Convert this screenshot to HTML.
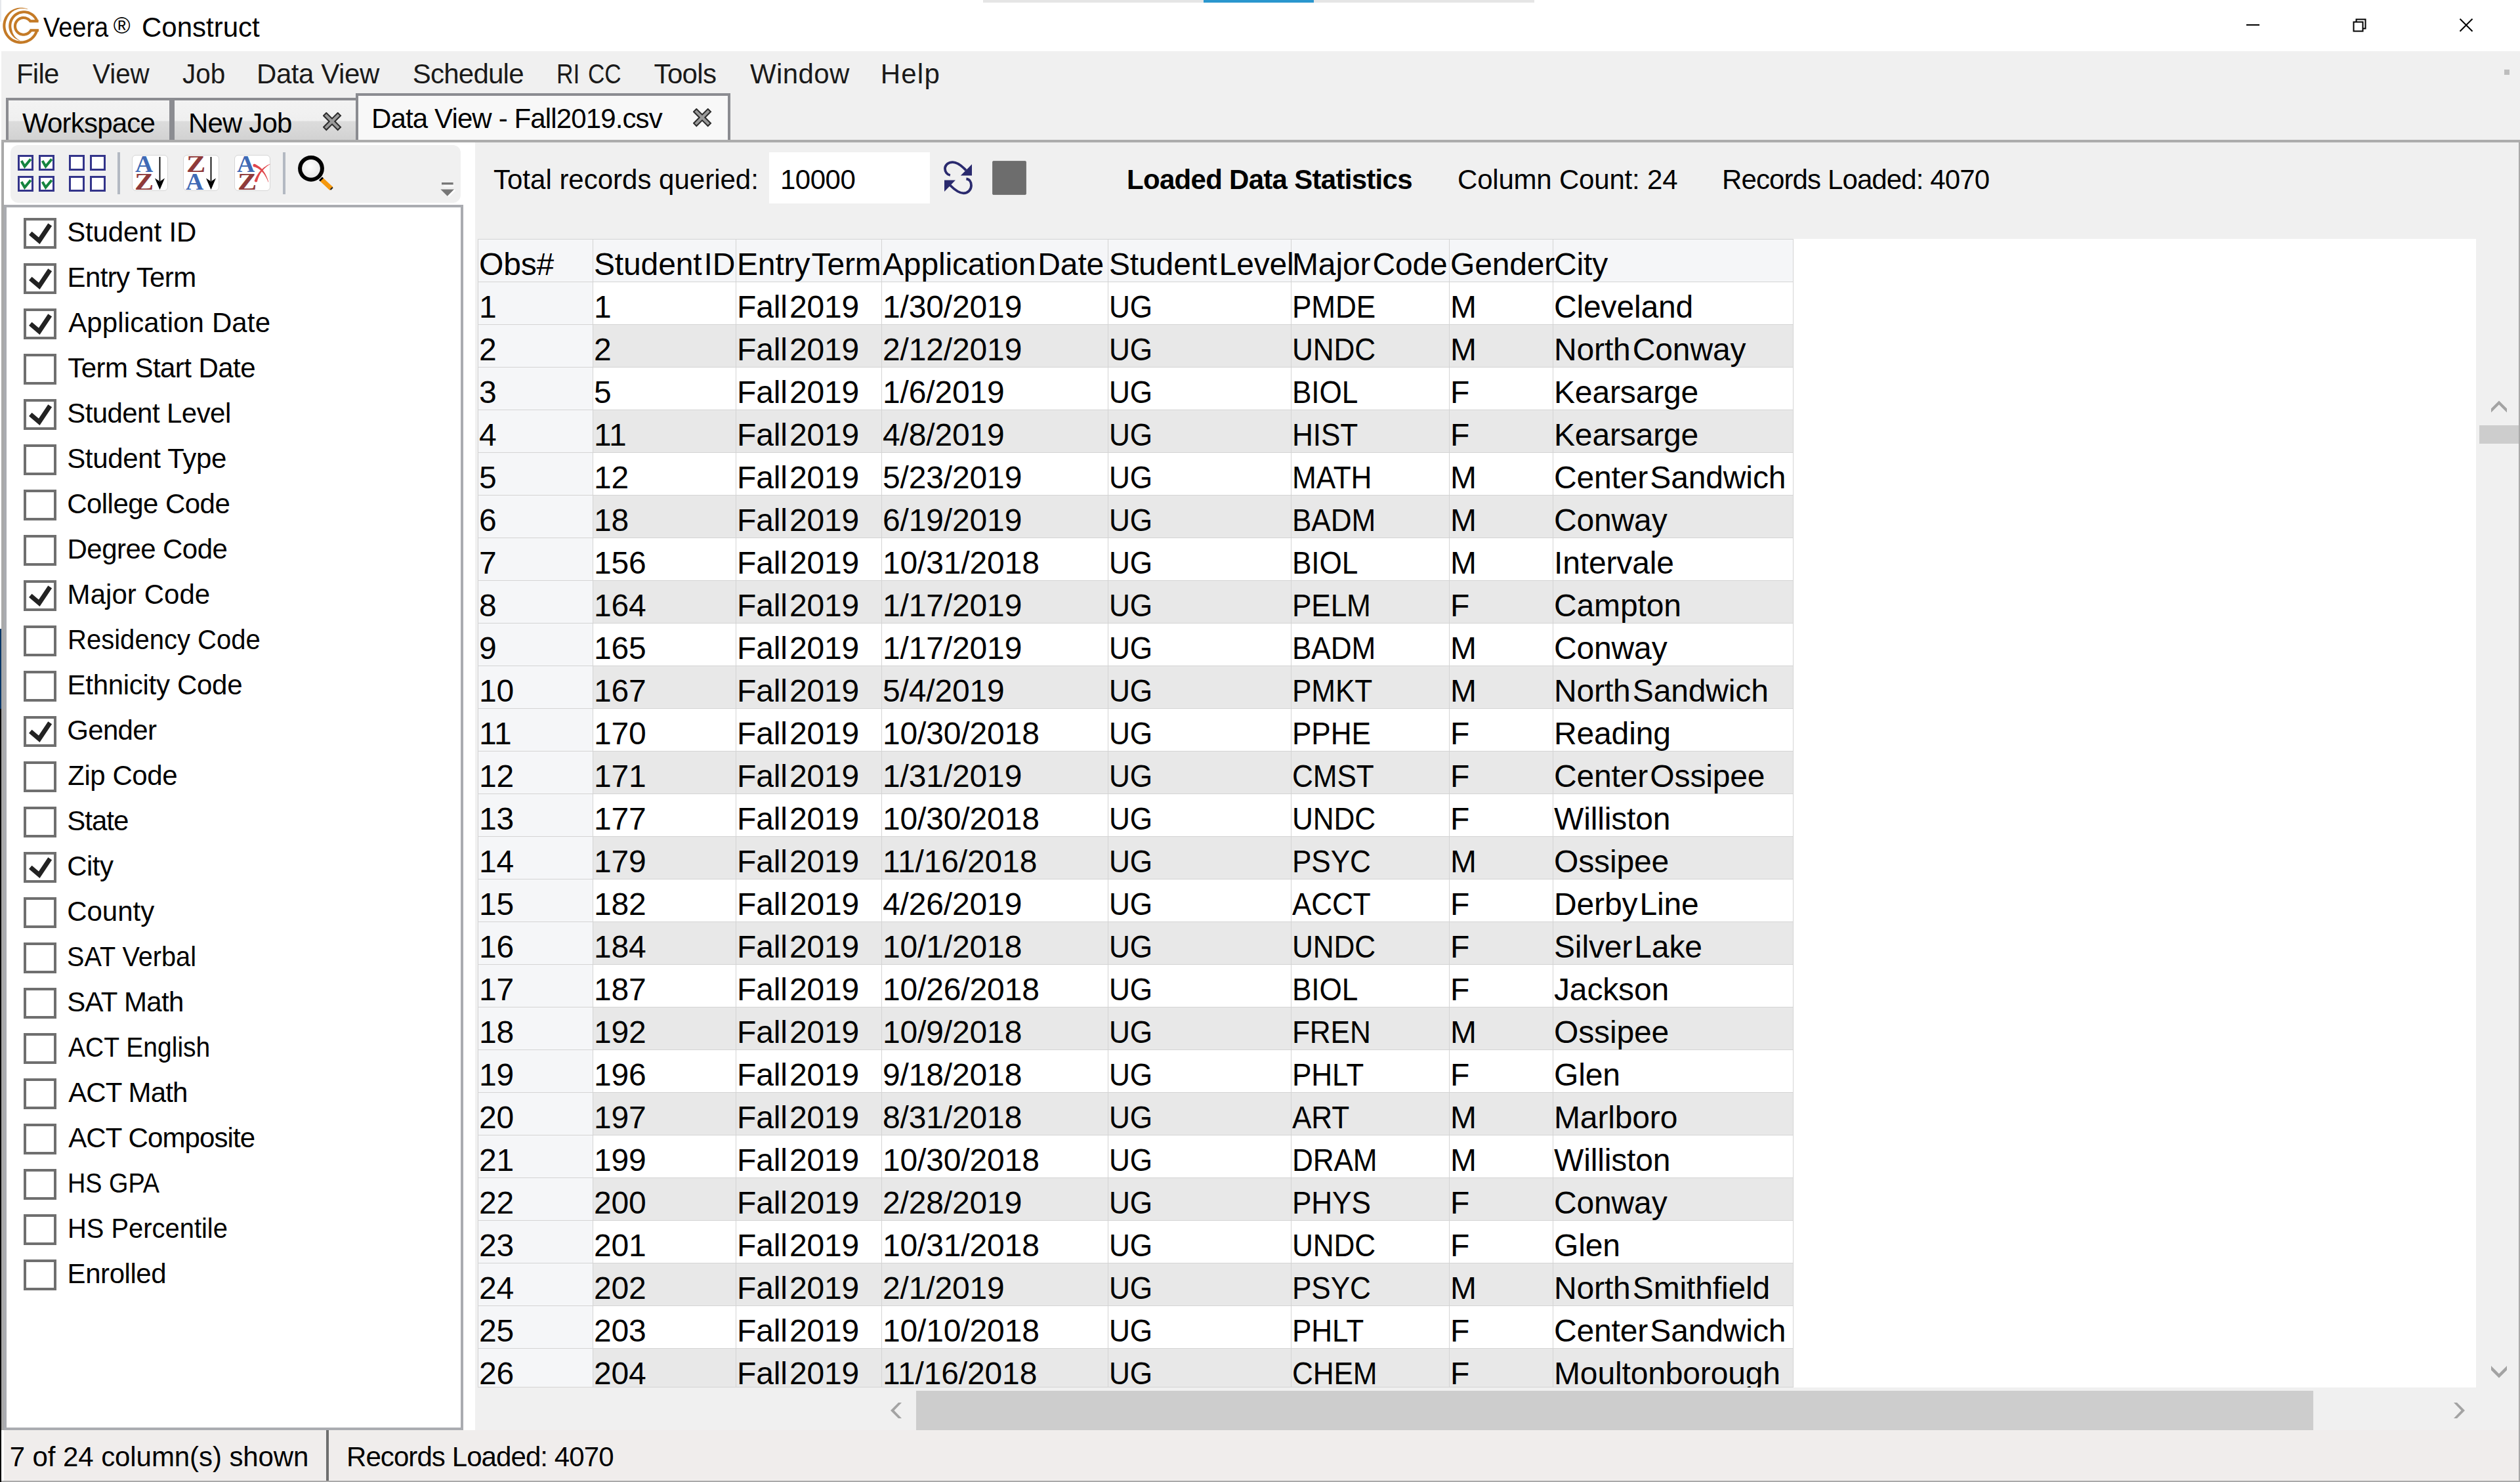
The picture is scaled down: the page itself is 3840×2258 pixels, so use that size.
<!DOCTYPE html>
<html><head><meta charset="utf-8"><style>
html,body{margin:0;padding:0;width:3840px;height:2258px;overflow:hidden;background:#fff}
body{position:relative;font-family:"Liberation Sans", sans-serif;color:#000}
body div, body svg{position:absolute;box-sizing:content-box}
#tbl div{position:absolute}
.t{white-space:pre;font-family:"Liberation Sans", sans-serif}
.s{font-family:"Liberation Serif",serif;font-weight:bold;font-size:36px;line-height:32px}
</style></head><body>
<div style="left:0px;top:0px;width:2px;height:33px;background:#e6e8ec"></div><svg style="left:0;top:0" width="64" height="78" viewBox="0 0 64 78"><g fill="#c47a26"><path d="M58.36 46.32 L57.70 48.44 L56.87 50.50 L55.88 52.49 L54.72 54.39 L53.42 56.19 L51.98 57.88 L50.40 59.45 L48.71 60.89 L46.90 62.18 L44.99 63.33 L43.00 64.32 L40.93 65.14 L38.81 65.79 L36.64 66.27 L34.44 66.57 L32.22 66.70 L29.99 66.64 L27.78 66.40 L25.60 65.99 L23.45 65.40 L21.36 64.64 L19.34 63.72 L17.40 62.63 L15.56 61.39 L13.82 60.01 L12.20 58.49 L10.70 56.84 L9.35 55.08 L8.14 53.21 L7.08 51.26 L6.19 49.22 L5.46 47.12 L4.91 44.96 L4.53 42.77 L4.33 40.56 L4.31 38.34 L4.47 36.12 L4.81 33.92 L5.33 31.76 L6.01 29.64 L6.87 27.59 L7.89 25.62 L9.06 23.73 L10.39 21.94 L11.85 20.27 L13.45 18.72 L15.16 17.31 L16.98 16.03 L18.90 14.91 L20.91 13.95 L22.98 13.15 L25.12 12.52 L27.29 12.07 L29.50 11.80 L31.72 11.70 L33.94 11.78 L36.15 12.05 L38.33 12.49 L40.47 13.10 L42.55 13.89 L42.39 14.25 L40.28 13.67 L38.14 13.25 L35.99 13.02 L33.85 12.96 L31.72 13.07 L29.63 13.36 L27.58 13.81 L25.59 14.42 L23.67 15.19 L21.84 16.11 L20.10 17.16 L18.46 18.34 L16.94 19.64 L15.53 21.05 L14.26 22.56 L13.13 24.15 L12.13 25.82 L11.29 27.55 L10.59 29.32 L9.86 31.07 L9.27 32.87 L8.84 34.71 L8.55 36.58 L8.41 38.46 L8.43 40.36 L8.60 42.24 L8.92 44.11 L9.39 45.94 L10.01 47.73 L10.77 49.46 L11.67 51.12 L12.69 52.71 L13.85 54.21 L15.12 55.61 L16.50 56.90 L17.98 58.08 L19.55 59.14 L21.20 60.06 L22.92 60.85 L24.70 61.50 L26.52 62.00 L28.38 62.35 L30.26 62.55 L32.15 62.60 L34.04 62.49 L35.92 62.23 L37.76 61.83 L39.57 61.27 L41.33 60.57 L43.03 59.73 L44.65 58.76 L46.19 57.66 L47.63 56.43 L48.97 55.10 L50.20 53.66 L51.31 52.13 L52.29 50.51 L53.13 48.82 L53.84 47.06 L54.40 45.26 Z"/><path d="M58.53 31.91 L57.96 30.43 L57.29 28.98 L56.52 27.59 L55.66 26.25 L54.71 24.97 L53.68 23.76 L52.56 22.62 L51.37 21.56 L50.11 20.59 L48.79 19.70 L47.41 18.91 L45.98 18.21 L44.50 17.62 L42.99 17.12 L41.44 16.73 L39.88 16.45 L38.29 16.27 L36.70 16.20 L35.11 16.24 L33.53 16.39 L31.95 16.65 L30.40 17.01 L28.88 17.48 L27.40 18.05 L25.95 18.72 L24.56 19.49 L23.22 20.36 L21.94 21.31 L20.73 22.34 L19.60 23.46 L18.54 24.65 L17.57 25.91 L16.69 27.24 L15.90 28.62 L15.20 30.05 L14.61 31.53 L14.11 33.05 L13.72 34.59 L13.44 36.16 L13.27 37.74 L13.20 39.33 L13.24 40.92 L13.39 42.51 L13.65 44.08 L14.02 45.63 L14.49 47.15 L15.07 48.64 L15.74 50.08 L16.51 51.47 L17.37 52.81 L18.33 54.08 L19.37 55.29 L20.49 56.42 L21.68 57.48 L22.94 58.45 L24.27 59.33 L25.65 60.12 L27.08 60.81 L28.56 61.41 L30.08 61.90 L30.19 61.51 L28.79 60.78 L27.46 59.96 L26.21 59.05 L25.04 58.08 L23.96 57.03 L22.96 55.93 L22.05 54.77 L21.24 53.57 L20.52 52.32 L19.91 51.05 L19.39 49.75 L18.97 48.43 L18.64 47.11 L18.36 45.80 L17.98 44.55 L17.67 43.27 L17.46 41.98 L17.34 40.67 L17.30 39.36 L17.35 38.05 L17.50 36.74 L17.73 35.45 L18.05 34.18 L18.46 32.93 L18.95 31.72 L19.52 30.54 L20.17 29.40 L20.90 28.31 L21.70 27.27 L22.57 26.28 L23.51 25.36 L24.50 24.51 L25.56 23.72 L26.66 23.01 L27.81 22.38 L29.00 21.83 L30.22 21.36 L31.48 20.97 L32.75 20.67 L34.05 20.46 L35.36 20.33 L36.67 20.30 L37.98 20.36 L39.28 20.50 L40.57 20.74 L41.85 21.06 L43.09 21.47 L44.31 21.96 L45.49 22.53 L46.63 23.19 L47.72 23.92 L48.76 24.72 L49.74 25.59 L50.66 26.53 L51.51 27.53 L52.29 28.58 L53.00 29.68 L53.63 30.83 L54.18 32.02 L54.65 33.25 Z"/><path d="M48.57 47.57 L47.86 48.64 L47.07 49.65 L46.19 50.58 L45.23 51.44 L44.20 52.20 L43.11 52.88 L41.97 53.46 L40.78 53.94 L39.56 54.32 L38.30 54.59 L37.03 54.75 L35.75 54.80 L34.47 54.74 L33.20 54.57 L31.94 54.29 L30.72 53.91 L29.53 53.42 L28.40 52.83 L27.31 52.15 L26.29 51.37 L25.34 50.51 L24.46 49.57 L23.67 48.56 L22.97 47.48 L22.37 46.35 L21.86 45.17 L21.46 43.96 L21.17 42.71 L20.98 41.44 L20.90 40.16 L20.94 38.88 L21.08 37.60 L21.33 36.35 L21.69 35.11 L22.15 33.92 L22.72 32.77 L23.38 31.67 L24.13 30.63 L24.97 29.66 L25.89 28.77 L26.89 27.96 L27.95 27.24 L29.07 26.61 L30.23 26.08 L31.44 25.65 L32.69 25.33 L33.95 25.12 L35.23 25.01 L36.51 25.02 L37.79 25.13 L39.05 25.36 L40.29 25.69 L41.49 26.13 L42.66 26.67 L43.77 27.31 L44.82 28.04 L45.81 28.86 L46.72 29.76 L47.55 30.74 L48.30 31.78 L44.86 34.02 L44.32 33.26 L43.72 32.55 L43.05 31.90 L42.34 31.31 L41.58 30.77 L40.77 30.31 L39.93 29.92 L39.05 29.60 L38.16 29.36 L37.24 29.20 L36.32 29.11 L35.39 29.11 L34.46 29.18 L33.54 29.34 L32.64 29.57 L31.77 29.88 L30.92 30.27 L30.11 30.72 L29.34 31.24 L28.62 31.83 L27.95 32.48 L27.34 33.18 L26.80 33.93 L26.32 34.73 L25.91 35.56 L25.57 36.43 L25.31 37.32 L25.13 38.24 L25.03 39.16 L25.00 40.09 L25.06 41.02 L25.19 41.94 L25.41 42.84 L25.70 43.72 L26.07 44.58 L26.50 45.40 L27.01 46.18 L27.58 46.91 L28.22 47.59 L28.91 48.21 L29.65 48.78 L30.43 49.27 L31.26 49.70 L32.12 50.05 L33.00 50.33 L33.91 50.53 L34.83 50.66 L35.76 50.70 L36.69 50.66 L37.61 50.55 L38.52 50.35 L39.41 50.08 L40.27 49.73 L41.10 49.31 L41.89 48.82 L42.64 48.26 L43.33 47.64 L43.97 46.97 L44.54 46.24 L45.06 45.46 Z"/><rect x="45" y="30.1" width="13.6" height="4.2"/><rect x="45.5" y="44.2" width="13.5" height="4.1"/></g></svg><div class="t" style="left:66.0px;top:21px;font-size:42px;line-height:42px;color:#000;transform:scaleX(0.9037);transform-origin:0 0;">Veera</div><div class="t" style="left:172.8px;top:21px;font-size:35px;line-height:35px;color:#000;">®</div><div class="t" style="left:216px;top:21px;font-size:42px;line-height:42px;color:#000;letter-spacing:0.0px;">Construct</div><div style="left:1498px;top:0px;width:840px;height:4px;background:#e5e5e5"></div><div style="left:1834px;top:0px;width:168px;height:4px;background:#2a97ce"></div><div style="left:3423px;top:37px;width:20px;height:2px;background:#000"></div><svg style="left:3580.5px;top:24.5px" width="30" height="30" viewBox="0 0 30 30"><g fill="none" stroke="#000" stroke-width="2"><rect x="5.5" y="8.5" width="14" height="14"/><path d="M9.5 8.5 V4.5 H23.5 V18.5 H19.5"/></g></svg><svg style="left:3743px;top:23px" width="30" height="30" viewBox="0 0 30 30"><g stroke="#000" stroke-width="2"><path d="M5.5 5.8 L24.5 24.8 M24.5 5.8 L5.5 24.8"/></g></svg><div style="left:2px;top:78px;width:3838px;height:135px;background:#f0f0f0"></div><div style="left:3816px;top:106px;width:8px;height:8px;background:#bdbdbd"></div><div class="t" style="left:25px;top:92px;font-size:42px;line-height:42px;color:#1a1a1a;letter-spacing:-0.8px;">File</div><div class="t" style="left:140.5px;top:92px;font-size:42px;line-height:42px;color:#1a1a1a;transform:scaleX(0.9607);transform-origin:0 0;">View</div><div class="t" style="left:278.04px;top:92px;font-size:42px;line-height:42px;color:#1a1a1a;transform:scaleX(0.9641);transform-origin:0 0;">Job</div><div class="t" style="left:391px;top:92px;font-size:42px;line-height:42px;color:#1a1a1a;letter-spacing:-0.42px;">Data View</div><div class="t" style="left:628.7px;top:92px;font-size:42px;line-height:42px;color:#1a1a1a;letter-spacing:-0.76px;">Schedule</div><div class="t" style="left:848.33px;top:92px;font-size:42px;line-height:42px;color:#1a1a1a;transform:scaleX(0.8424);transform-origin:0 0;">RI</div><div class="t" style="left:895.53px;top:92px;font-size:42px;line-height:42px;color:#1a1a1a;transform:scaleX(0.8357);transform-origin:0 0;">CC</div><div class="t" style="left:996.5px;top:92px;font-size:42px;line-height:42px;color:#1a1a1a;letter-spacing:-0.62px;">Tools</div><div class="t" style="left:1143px;top:92px;font-size:42px;line-height:42px;color:#1a1a1a;letter-spacing:0.4px;">Window</div><div class="t" style="left:1341.7px;top:92px;font-size:42px;line-height:42px;color:#1a1a1a;letter-spacing:1.23px;">Help</div><div style="left:9px;top:149px;width:245px;height:60px;border:4px solid #8b8c91;border-bottom:none;background:linear-gradient(#f3f3f3 0px,#efefef 31px,#dcdcdc 32px,#d2d2d2 60px)"></div><div style="left:262px;top:149px;width:276px;height:60px;border:4px solid #8b8c91;border-bottom:none;background:linear-gradient(#f3f3f3 0px,#efefef 31px,#dcdcdc 32px,#d2d2d2 60px)"></div><div style="left:542px;top:142px;width:563px;height:67px;border:4px solid #8b8c91;border-bottom:none;background:#f8f8f8"></div><div class="t" style="left:34px;top:167px;font-size:42px;line-height:42px;;letter-spacing:-0.81px;">Workspace</div><div class="t" style="left:287px;top:167px;font-size:42px;line-height:42px;;letter-spacing:-0.83px;">New Job</div><div class="t" style="left:566px;top:160px;font-size:42px;line-height:42px;;letter-spacing:-0.87px;">Data View - Fall2019.csv</div><svg style="left:492px;top:171px" width="30" height="30" viewBox="0 0 30 30"><path d="M1 5.3 L5.3 1 L14 9.7 L22.7 1 L27 5.3 L18.3 14 L27 22.7 L22.7 27 L14 18.3 L5.3 27 L1 22.7 L9.7 14 Z" fill="#999" stroke="#2b2b2b" stroke-width="2" stroke-linejoin="miter"/></svg><svg style="left:1056px;top:165px" width="30" height="30" viewBox="0 0 30 30"><path d="M1 5.3 L5.3 1 L14 9.7 L22.7 1 L27 5.3 L18.3 14 L27 22.7 L22.7 27 L14 18.3 L5.3 27 L1 22.7 L9.7 14 Z" fill="#999" stroke="#2b2b2b" stroke-width="2" stroke-linejoin="miter"/></svg><div style="left:2px;top:213px;width:3838px;height:4px;background:#acacac"></div><div style="left:2px;top:217px;width:4px;height:1962px;background:#a9a9a9"></div><div style="left:3838px;top:217px;width:2px;height:2041px;background:#a9a9a9"></div><div style="left:6px;top:217px;width:718px;height:1962px;background:#fff"></div><div style="left:724px;top:217px;width:3114px;height:1962px;background:#f0f0f0"></div><div style="left:16px;top:221px;width:686px;height:88px;background:#f0f0f0;border-radius:12px"></div><div style="left:27px;top:236px;width:18px;height:18px;border:3.2px solid #33348a;background:#fff"></div><svg style="left:27px;top:236px" width="24" height="24" viewBox="0 0 24 24"><path d="M5.6 9 L10.6 17.6 L19.8 6.4" fill="none" stroke="#15843f" stroke-width="4"/></svg><div style="left:58.6px;top:236px;width:18px;height:18px;border:3.2px solid #33348a;background:#fff"></div><svg style="left:58.6px;top:236px" width="24" height="24" viewBox="0 0 24 24"><path d="M5.6 9 L10.6 17.6 L19.8 6.4" fill="none" stroke="#15843f" stroke-width="4"/></svg><div style="left:27px;top:267.6px;width:18px;height:18px;border:3.2px solid #33348a;background:#fff"></div><svg style="left:27px;top:267.6px" width="24" height="24" viewBox="0 0 24 24"><path d="M5.6 9 L10.6 17.6 L19.8 6.4" fill="none" stroke="#15843f" stroke-width="4"/></svg><div style="left:58.6px;top:267.6px;width:18px;height:18px;border:3.2px solid #33348a;background:#fff"></div><svg style="left:58.6px;top:267.6px" width="24" height="24" viewBox="0 0 24 24"><path d="M5.6 9 L10.6 17.6 L19.8 6.4" fill="none" stroke="#15843f" stroke-width="4"/></svg><div style="left:105px;top:236px;width:18px;height:18px;border:3.2px solid #33348a;background:#fff"></div><div style="left:136.6px;top:236px;width:18px;height:18px;border:3.2px solid #33348a;background:#fff"></div><div style="left:105px;top:267.6px;width:18px;height:18px;border:3.2px solid #33348a;background:#fff"></div><div style="left:136.6px;top:267.6px;width:18px;height:18px;border:3.2px solid #33348a;background:#fff"></div><div style="left:179px;top:232px;width:4px;height:64px;background:#b3b9c2"></div><div style="left:431px;top:232px;width:4px;height:64px;background:#b3b9c2"></div><div style="left:201px;top:236px;width:53px;height:53px;border:1px solid #d6d6d6;border-radius:6px;background:#fff"></div><div class="s" style="left:205.7px;top:234px;color:#3f6ab5;transform:scaleX(1.05);transform-origin:0 0">A</div><div class="s" style="left:205.2px;top:261px;color:#8f3a3a;transform:scaleX(1.22);transform-origin:0 0">Z</div><svg style="left:201px;top:236px" width="55" height="55" viewBox="0 0 55 55"><path d="M42.5 3 V40" stroke="#000" stroke-width="1.8"/><path d="M35 35.5 L42.5 53 L50 35.5 L42.5 40.5 Z" fill="#000"/></svg><div style="left:279px;top:236px;width:53px;height:53px;border:1px solid #d6d6d6;border-radius:6px;background:#fff"></div><div class="s" style="left:283.5px;top:234px;color:#8f3a3a;transform:scaleX(1.22);transform-origin:0 0">Z</div><div class="s" style="left:283.1px;top:261px;color:#3f6ab5;transform:scaleX(1.05);transform-origin:0 0">A</div><svg style="left:279px;top:236px" width="55" height="55" viewBox="0 0 55 55"><path d="M42.5 3 V40" stroke="#000" stroke-width="1.8"/><path d="M35 35.5 L42.5 53 L50 35.5 L42.5 40.5 Z" fill="#000"/></svg><div style="left:357px;top:236px;width:53px;height:53px;border:1px solid #d6d6d6;border-radius:6px;background:#fff"></div><div class="s" style="left:360.5px;top:234px;color:#3f6ab5;transform:scaleX(1.05);transform-origin:0 0">A</div><div class="s" style="left:362px;top:261px;color:#8f3a3a;transform:scaleX(1.22);transform-origin:0 0">Z</div><svg style="left:357px;top:236px" width="55" height="55" viewBox="0 0 55 55"><g fill="#e0474c"><path d="M29.15 17.90 L30.33 18.21 L31.49 18.58 L32.63 19.00 L33.75 19.48 L34.85 20.01 L35.93 20.60 L36.99 21.25 L38.03 21.96 L39.06 22.73 L40.06 23.55 L41.04 24.44 L42.00 25.39 L42.94 26.40 L43.86 27.48 L44.76 28.61 L45.63 29.81 L46.48 31.06 L47.30 32.38 L48.10 33.77 L48.88 35.21 L49.63 36.71 L50.35 38.28 L51.05 39.91 L51.72 41.59 L52.28 41.41 L51.76 39.65 L51.20 37.95 L50.62 36.30 L50.00 34.70 L49.35 33.15 L48.67 31.65 L47.96 30.21 L47.21 28.82 L46.44 27.47 L45.62 26.18 L44.78 24.95 L43.90 23.76 L42.98 22.62 L42.03 21.54 L41.04 20.51 L40.01 19.53 L38.95 18.60 L37.84 17.73 L36.71 16.92 L35.53 16.16 L34.31 15.46 L33.06 14.81 L31.77 14.23 L30.45 13.70 Z"/><path d="M54.36 13.73 L52.96 14.40 L51.60 15.09 L50.27 15.83 L48.97 16.60 L47.71 17.40 L46.49 18.24 L45.30 19.12 L44.15 20.03 L43.03 20.99 L41.95 21.97 L40.91 23.00 L39.90 24.06 L38.93 25.16 L38.00 26.30 L37.10 27.47 L36.24 28.69 L35.42 29.94 L34.64 31.22 L33.90 32.55 L33.20 33.91 L32.53 35.30 L31.91 36.74 L31.33 38.21 L30.78 39.71 L34.82 40.89 L35.18 39.46 L35.58 38.06 L36.02 36.69 L36.50 35.34 L37.01 34.03 L37.57 32.74 L38.17 31.48 L38.80 30.25 L39.48 29.04 L40.20 27.86 L40.95 26.71 L41.75 25.59 L42.59 24.49 L43.47 23.42 L44.40 22.38 L45.36 21.37 L46.37 20.38 L47.42 19.42 L48.52 18.49 L49.65 17.59 L50.83 16.71 L52.06 15.87 L53.33 15.05 L54.64 14.27 Z"/><circle cx="30.6" cy="16" r="2.2"/><circle cx="32.9" cy="39.6" r="2"/></g></svg><svg style="left:450px;top:232px" width="64" height="64" viewBox="0 0 64 64"><defs><radialGradient id="mg" cx="0.45" cy="0.4" r="0.6"><stop offset="0" stop-color="#fff"/><stop offset="1" stop-color="#e4e4e4"/></radialGradient></defs><circle cx="24" cy="24.8" r="16.9" fill="url(#mg)" stroke="#000" stroke-width="6"/><path d="M40 41.5 L55 55.5" stroke="#f5980e" stroke-width="7"/><path d="M38.5 40 L40.5 42" stroke="#000" stroke-width="7"/><path d="M53.5 57 L57 53.5" stroke="#222" stroke-width="2"/></svg><svg style="left:668px;top:274px" width="30" height="30" viewBox="0 0 30 30"><rect x="5" y="4" width="17.6" height="3.3" fill="#777"/><rect x="8" y="8.5" width="16" height="1.5" fill="#fff"/><path d="M3.4 14.4 L24 14.4 L13.7 24.8 Z" fill="#777"/><path d="M24 14.8 L26 16.5 L16 26 L14.5 25 Z" fill="#fff"/></svg><div style="left:6px;top:312px;width:692px;height:1859px;border:4px solid #aaacb1;background:#fff"></div><div style="left:36px;top:332px;width:42px;height:39px;border:4px solid #6f6f6f;background:#fff"></div><svg style="left:36px;top:332px" width="50" height="47" viewBox="0 0 50 47"><path d="M10.3 23.3 L23.8 34.8 L40.2 10.3" fill="none" stroke="#222" stroke-width="7" stroke-linecap="butt" stroke-linejoin="miter"/></svg><div class="t" style="left:102.2px;top:333px;font-size:42px;line-height:42px;;letter-spacing:-0.14px;">Student ID</div><div style="left:36px;top:401px;width:42px;height:39px;border:4px solid #6f6f6f;background:#fff"></div><svg style="left:36px;top:401px" width="50" height="47" viewBox="0 0 50 47"><path d="M10.3 23.3 L23.8 34.8 L40.2 10.3" fill="none" stroke="#222" stroke-width="7" stroke-linecap="butt" stroke-linejoin="miter"/></svg><div class="t" style="left:102.6px;top:402px;font-size:42px;line-height:42px;;letter-spacing:-0.63px;">Entry Term</div><div style="left:36px;top:470px;width:42px;height:39px;border:4px solid #6f6f6f;background:#fff"></div><svg style="left:36px;top:470px" width="50" height="47" viewBox="0 0 50 47"><path d="M10.3 23.3 L23.8 34.8 L40.2 10.3" fill="none" stroke="#222" stroke-width="7" stroke-linecap="butt" stroke-linejoin="miter"/></svg><div class="t" style="left:104.2px;top:471px;font-size:42px;line-height:42px;;letter-spacing:0.13px;">Application Date</div><div style="left:36px;top:539px;width:42px;height:39px;border:4px solid #6f6f6f;background:#fff"></div><div class="t" style="left:103.2px;top:540px;font-size:42px;line-height:42px;;letter-spacing:-0.55px;">Term Start Date</div><div style="left:36px;top:608px;width:42px;height:39px;border:4px solid #6f6f6f;background:#fff"></div><svg style="left:36px;top:608px" width="50" height="47" viewBox="0 0 50 47"><path d="M10.3 23.3 L23.8 34.8 L40.2 10.3" fill="none" stroke="#222" stroke-width="7" stroke-linecap="butt" stroke-linejoin="miter"/></svg><div class="t" style="left:102.2px;top:609px;font-size:42px;line-height:42px;;letter-spacing:-0.57px;">Student Level</div><div style="left:36px;top:677px;width:42px;height:39px;border:4px solid #6f6f6f;background:#fff"></div><div class="t" style="left:102.2px;top:678px;font-size:42px;line-height:42px;;letter-spacing:-0.33px;">Student Type</div><div style="left:36px;top:746px;width:42px;height:39px;border:4px solid #6f6f6f;background:#fff"></div><div class="t" style="left:102.2px;top:747px;font-size:42px;line-height:42px;;letter-spacing:-0.54px;">College Code</div><div style="left:36px;top:815px;width:42px;height:39px;border:4px solid #6f6f6f;background:#fff"></div><div class="t" style="left:102.6px;top:816px;font-size:42px;line-height:42px;;letter-spacing:-0.56px;">Degree Code</div><div style="left:36px;top:884px;width:42px;height:39px;border:4px solid #6f6f6f;background:#fff"></div><svg style="left:36px;top:884px" width="50" height="47" viewBox="0 0 50 47"><path d="M10.3 23.3 L23.8 34.8 L40.2 10.3" fill="none" stroke="#222" stroke-width="7" stroke-linecap="butt" stroke-linejoin="miter"/></svg><div class="t" style="left:102.6px;top:885px;font-size:42px;line-height:42px;;letter-spacing:0.06px;">Major Code</div><div style="left:36px;top:953px;width:42px;height:39px;border:4px solid #6f6f6f;background:#fff"></div><div class="t" style="left:102.74px;top:954px;font-size:42px;line-height:42px;;transform:scaleX(0.9536);transform-origin:0 0;">Residency Code</div><div style="left:36px;top:1022px;width:42px;height:39px;border:4px solid #6f6f6f;background:#fff"></div><div class="t" style="left:102.6px;top:1023px;font-size:42px;line-height:42px;;letter-spacing:-0.3px;">Ethnicity Code</div><div style="left:36px;top:1091px;width:42px;height:39px;border:4px solid #6f6f6f;background:#fff"></div><svg style="left:36px;top:1091px" width="50" height="47" viewBox="0 0 50 47"><path d="M10.3 23.3 L23.8 34.8 L40.2 10.3" fill="none" stroke="#222" stroke-width="7" stroke-linecap="butt" stroke-linejoin="miter"/></svg><div class="t" style="left:102.2px;top:1092px;font-size:42px;line-height:42px;;letter-spacing:-0.66px;">Gender</div><div style="left:36px;top:1160px;width:42px;height:39px;border:4px solid #6f6f6f;background:#fff"></div><div class="t" style="left:103.2px;top:1161px;font-size:42px;line-height:42px;;letter-spacing:-0.44px;">Zip Code</div><div style="left:36px;top:1229px;width:42px;height:39px;border:4px solid #6f6f6f;background:#fff"></div><div class="t" style="left:102.2px;top:1230px;font-size:42px;line-height:42px;;letter-spacing:-0.97px;">State</div><div style="left:36px;top:1298px;width:42px;height:39px;border:4px solid #6f6f6f;background:#fff"></div><svg style="left:36px;top:1298px" width="50" height="47" viewBox="0 0 50 47"><path d="M10.3 23.3 L23.8 34.8 L40.2 10.3" fill="none" stroke="#222" stroke-width="7" stroke-linecap="butt" stroke-linejoin="miter"/></svg><div class="t" style="left:102.2px;top:1299px;font-size:42px;line-height:42px;;letter-spacing:-0.5px;">City</div><div style="left:36px;top:1367px;width:42px;height:39px;border:4px solid #6f6f6f;background:#fff"></div><div class="t" style="left:102.2px;top:1368px;font-size:42px;line-height:42px;;letter-spacing:-0.02px;">County</div><div style="left:36px;top:1436px;width:42px;height:39px;border:4px solid #6f6f6f;background:#fff"></div><div class="t" style="left:102.31px;top:1437px;font-size:42px;line-height:42px;;transform:scaleX(0.9443);transform-origin:0 0;">SAT Verbal</div><div style="left:36px;top:1505px;width:42px;height:39px;border:4px solid #6f6f6f;background:#fff"></div><div class="t" style="left:102.2px;top:1506px;font-size:42px;line-height:42px;;letter-spacing:-0.66px;">SAT Math</div><div style="left:36px;top:1574px;width:42px;height:39px;border:4px solid #6f6f6f;background:#fff"></div><div class="t" style="left:104.2px;top:1575px;font-size:42px;line-height:42px;;transform:scaleX(0.9297);transform-origin:0 0;">ACT English</div><div style="left:36px;top:1643px;width:42px;height:39px;border:4px solid #6f6f6f;background:#fff"></div><div class="t" style="left:104.2px;top:1644px;font-size:42px;line-height:42px;;letter-spacing:-0.87px;">ACT Math</div><div style="left:36px;top:1712px;width:42px;height:39px;border:4px solid #6f6f6f;background:#fff"></div><div class="t" style="left:104.2px;top:1713px;font-size:42px;line-height:42px;;letter-spacing:-0.89px;">ACT Composite</div><div style="left:36px;top:1781px;width:42px;height:39px;border:4px solid #6f6f6f;background:#fff"></div><div class="t" style="left:102.9px;top:1782px;font-size:42px;line-height:42px;;transform:scaleX(0.9000);transform-origin:0 0;">HS GPA</div><div style="left:36px;top:1850px;width:42px;height:39px;border:4px solid #6f6f6f;background:#fff"></div><div class="t" style="left:102.75px;top:1851px;font-size:42px;line-height:42px;;transform:scaleX(0.9498);transform-origin:0 0;">HS Percentile</div><div style="left:36px;top:1919px;width:42px;height:39px;border:4px solid #6f6f6f;background:#fff"></div><div class="t" style="left:102.6px;top:1920px;font-size:42px;line-height:42px;;letter-spacing:-0.44px;">Enrolled</div><div class="t" style="left:752px;top:253px;font-size:42px;line-height:42px;;letter-spacing:0.0px;">Total records queried:</div><div style="left:1172px;top:232px;width:245px;height:78px;background:#fff"></div><div class="t" style="left:1189px;top:253px;font-size:42px;line-height:42px;;letter-spacing:-0.5px;">10000</div><svg style="left:1420px;top:230px" width="80" height="80" viewBox="0 0 80 80"><g fill="none" stroke="#2a2a6e" stroke-width="3.8"><path d="M27.9 37 C23 36 20 31.5 20 27 C20 21 25.5 17.1 31.7 17.1 C38 17.1 45 22 52 29.5"/><path d="M52.4 42.5 C57 43 60 47 60 52.5 C60 59 55 64.4 48.3 64.4 C42 64.4 35 59.5 27.5 52"/></g><g fill="#2a2a6e"><path d="M61 20.3 L61 37.5 L43.8 37.5 Z"/><path d="M19 44.4 L35.9 44.4 L19 61.9 Z"/></g></svg><div style="left:1512px;top:245px;width:50px;height:50px;border:1px solid #7a7a7a;border-radius:2px;background:#6d6d6d"></div><div class="t" style="left:1717px;top:253px;font-size:42px;line-height:42px;font-weight:bold;letter-spacing:-0.71px;">Loaded Data Statistics</div><div class="t" style="left:2221px;top:253px;font-size:42px;line-height:42px;;letter-spacing:-0.2px;">Column Count: 24</div><div class="t" style="left:2624px;top:253px;font-size:42px;line-height:42px;;letter-spacing:-0.89px;">Records Loaded: 4070</div><div style="left:2733px;top:364px;width:1040px;height:1750px;background:#fff"></div><div style="left:728px;top:364px;width:2005px;height:1750px;background:#fff;overflow:hidden" id="tbl"><div style="left:0;top:0px;width:2005px;height:65px;background:#f5f6f8"></div><div style="left:0;top:130px;width:2005px;height:65px;background:#e8e8e8"></div><div style="left:0;top:260px;width:2005px;height:65px;background:#e8e8e8"></div><div style="left:0;top:390px;width:2005px;height:65px;background:#e8e8e8"></div><div style="left:0;top:520px;width:2005px;height:65px;background:#e8e8e8"></div><div style="left:0;top:650px;width:2005px;height:65px;background:#e8e8e8"></div><div style="left:0;top:780px;width:2005px;height:65px;background:#e8e8e8"></div><div style="left:0;top:910px;width:2005px;height:65px;background:#e8e8e8"></div><div style="left:0;top:1040px;width:2005px;height:65px;background:#e8e8e8"></div><div style="left:0;top:1170px;width:2005px;height:65px;background:#e8e8e8"></div><div style="left:0;top:1300px;width:2005px;height:65px;background:#e8e8e8"></div><div style="left:0;top:1430px;width:2005px;height:65px;background:#e8e8e8"></div><div style="left:0;top:1560px;width:2005px;height:65px;background:#e8e8e8"></div><div style="left:0;top:1690px;width:2005px;height:65px;background:#e8e8e8"></div><div style="left:0;top:0;width:175px;height:1750px;background:#f5f6f8"></div><div style="left:0;top:0px;width:2005px;height:1px;background:#d4d4d4"></div><div style="left:0;top:65px;width:2005px;height:1px;background:#d4d4d4"></div><div style="left:0;top:130px;width:2005px;height:1px;background:#d4d4d4"></div><div style="left:0;top:195px;width:2005px;height:1px;background:#d4d4d4"></div><div style="left:0;top:260px;width:2005px;height:1px;background:#d4d4d4"></div><div style="left:0;top:325px;width:2005px;height:1px;background:#d4d4d4"></div><div style="left:0;top:390px;width:2005px;height:1px;background:#d4d4d4"></div><div style="left:0;top:455px;width:2005px;height:1px;background:#d4d4d4"></div><div style="left:0;top:520px;width:2005px;height:1px;background:#d4d4d4"></div><div style="left:0;top:585px;width:2005px;height:1px;background:#d4d4d4"></div><div style="left:0;top:650px;width:2005px;height:1px;background:#d4d4d4"></div><div style="left:0;top:715px;width:2005px;height:1px;background:#d4d4d4"></div><div style="left:0;top:780px;width:2005px;height:1px;background:#d4d4d4"></div><div style="left:0;top:845px;width:2005px;height:1px;background:#d4d4d4"></div><div style="left:0;top:910px;width:2005px;height:1px;background:#d4d4d4"></div><div style="left:0;top:975px;width:2005px;height:1px;background:#d4d4d4"></div><div style="left:0;top:1040px;width:2005px;height:1px;background:#d4d4d4"></div><div style="left:0;top:1105px;width:2005px;height:1px;background:#d4d4d4"></div><div style="left:0;top:1170px;width:2005px;height:1px;background:#d4d4d4"></div><div style="left:0;top:1235px;width:2005px;height:1px;background:#d4d4d4"></div><div style="left:0;top:1300px;width:2005px;height:1px;background:#d4d4d4"></div><div style="left:0;top:1365px;width:2005px;height:1px;background:#d4d4d4"></div><div style="left:0;top:1430px;width:2005px;height:1px;background:#d4d4d4"></div><div style="left:0;top:1495px;width:2005px;height:1px;background:#d4d4d4"></div><div style="left:0;top:1560px;width:2005px;height:1px;background:#d4d4d4"></div><div style="left:0;top:1625px;width:2005px;height:1px;background:#d4d4d4"></div><div style="left:0;top:1690px;width:2005px;height:1px;background:#d4d4d4"></div><div style="left:0;top:1749px;width:2005px;height:1px;background:#d4d4d4"></div><div style="left:0px;top:0;width:1px;height:1750px;background:#d4d4d4"></div><div style="left:175px;top:0;width:1px;height:1750px;background:#d4d4d4"></div><div style="left:393px;top:0;width:1px;height:1750px;background:#d4d4d4"></div><div style="left:615px;top:0;width:1px;height:1750px;background:#d4d4d4"></div><div style="left:960px;top:0;width:1px;height:1750px;background:#d4d4d4"></div><div style="left:1239px;top:0;width:1px;height:1750px;background:#d4d4d4"></div><div style="left:1480px;top:0;width:1px;height:1750px;background:#d4d4d4"></div><div style="left:1638px;top:0;width:1px;height:1750px;background:#d4d4d4"></div><div style="left:2004px;top:0;width:1px;height:1750px;background:#d4d4d4"></div><div class="t" style="left:2px;top:15px;font-size:48px;line-height:48px;word-spacing:-10px;letter-spacing:-0.15px;">Obs#</div><div class="t" style="left:177px;top:15px;font-size:48px;line-height:48px;word-spacing:-10px;letter-spacing:-0.15px;">Student ID</div><div class="t" style="left:395px;top:15px;font-size:48px;line-height:48px;word-spacing:-10px;letter-spacing:-0.15px;">Entry Term</div><div class="t" style="left:617px;top:15px;font-size:48px;line-height:48px;word-spacing:-10px;letter-spacing:-0.15px;">Application Date</div><div class="t" style="left:962px;top:15px;font-size:48px;line-height:48px;word-spacing:-10px;letter-spacing:-0.15px;">Student Level</div><div class="t" style="left:1241px;top:15px;font-size:48px;line-height:48px;word-spacing:-10px;letter-spacing:-0.15px;">Major Code</div><div class="t" style="left:1482px;top:15px;font-size:48px;line-height:48px;word-spacing:-10px;letter-spacing:-0.15px;">Gender</div><div class="t" style="left:1640px;top:15px;font-size:48px;line-height:48px;word-spacing:-10px;letter-spacing:-0.15px;">City</div><div class="t" style="left:2px;top:80px;font-size:48px;line-height:48px;word-spacing:-10px;letter-spacing:-0.15px;">1</div><div class="t" style="left:177px;top:80px;font-size:48px;line-height:48px;word-spacing:-10px;letter-spacing:-0.15px;">1</div><div class="t" style="left:395px;top:80px;font-size:48px;line-height:48px;word-spacing:-10px;letter-spacing:-0.15px;">Fall 2019</div><div class="t" style="left:617px;top:80px;font-size:48px;line-height:48px;word-spacing:-10px;letter-spacing:-0.15px;">1/30/2019</div><div class="t" style="left:962px;top:80px;font-size:48px;line-height:48px;word-spacing:-10px;letter-spacing:-0.15px;transform:scaleX(0.92);transform-origin:0 0;">UG</div><div class="t" style="left:1241px;top:80px;font-size:48px;line-height:48px;word-spacing:-10px;letter-spacing:-0.15px;transform:scaleX(0.92);transform-origin:0 0;">PMDE</div><div class="t" style="left:1482px;top:80px;font-size:48px;line-height:48px;word-spacing:-10px;letter-spacing:-0.15px;">M</div><div class="t" style="left:1640px;top:80px;font-size:48px;line-height:48px;word-spacing:-10px;letter-spacing:-0.15px;">Cleveland</div><div class="t" style="left:2px;top:145px;font-size:48px;line-height:48px;word-spacing:-10px;letter-spacing:-0.15px;">2</div><div class="t" style="left:177px;top:145px;font-size:48px;line-height:48px;word-spacing:-10px;letter-spacing:-0.15px;">2</div><div class="t" style="left:395px;top:145px;font-size:48px;line-height:48px;word-spacing:-10px;letter-spacing:-0.15px;">Fall 2019</div><div class="t" style="left:617px;top:145px;font-size:48px;line-height:48px;word-spacing:-10px;letter-spacing:-0.15px;">2/12/2019</div><div class="t" style="left:962px;top:145px;font-size:48px;line-height:48px;word-spacing:-10px;letter-spacing:-0.15px;transform:scaleX(0.92);transform-origin:0 0;">UG</div><div class="t" style="left:1241px;top:145px;font-size:48px;line-height:48px;word-spacing:-10px;letter-spacing:-0.15px;transform:scaleX(0.92);transform-origin:0 0;">UNDC</div><div class="t" style="left:1482px;top:145px;font-size:48px;line-height:48px;word-spacing:-10px;letter-spacing:-0.15px;">M</div><div class="t" style="left:1640px;top:145px;font-size:48px;line-height:48px;word-spacing:-10px;letter-spacing:-0.15px;">North Conway</div><div class="t" style="left:2px;top:210px;font-size:48px;line-height:48px;word-spacing:-10px;letter-spacing:-0.15px;">3</div><div class="t" style="left:177px;top:210px;font-size:48px;line-height:48px;word-spacing:-10px;letter-spacing:-0.15px;">5</div><div class="t" style="left:395px;top:210px;font-size:48px;line-height:48px;word-spacing:-10px;letter-spacing:-0.15px;">Fall 2019</div><div class="t" style="left:617px;top:210px;font-size:48px;line-height:48px;word-spacing:-10px;letter-spacing:-0.15px;">1/6/2019</div><div class="t" style="left:962px;top:210px;font-size:48px;line-height:48px;word-spacing:-10px;letter-spacing:-0.15px;transform:scaleX(0.92);transform-origin:0 0;">UG</div><div class="t" style="left:1241px;top:210px;font-size:48px;line-height:48px;word-spacing:-10px;letter-spacing:-0.15px;transform:scaleX(0.92);transform-origin:0 0;">BIOL</div><div class="t" style="left:1482px;top:210px;font-size:48px;line-height:48px;word-spacing:-10px;letter-spacing:-0.15px;">F</div><div class="t" style="left:1640px;top:210px;font-size:48px;line-height:48px;word-spacing:-10px;letter-spacing:-0.15px;">Kearsarge</div><div class="t" style="left:2px;top:275px;font-size:48px;line-height:48px;word-spacing:-10px;letter-spacing:-0.15px;">4</div><div class="t" style="left:177px;top:275px;font-size:48px;line-height:48px;word-spacing:-10px;letter-spacing:-0.15px;">11</div><div class="t" style="left:395px;top:275px;font-size:48px;line-height:48px;word-spacing:-10px;letter-spacing:-0.15px;">Fall 2019</div><div class="t" style="left:617px;top:275px;font-size:48px;line-height:48px;word-spacing:-10px;letter-spacing:-0.15px;">4/8/2019</div><div class="t" style="left:962px;top:275px;font-size:48px;line-height:48px;word-spacing:-10px;letter-spacing:-0.15px;transform:scaleX(0.92);transform-origin:0 0;">UG</div><div class="t" style="left:1241px;top:275px;font-size:48px;line-height:48px;word-spacing:-10px;letter-spacing:-0.15px;transform:scaleX(0.92);transform-origin:0 0;">HIST</div><div class="t" style="left:1482px;top:275px;font-size:48px;line-height:48px;word-spacing:-10px;letter-spacing:-0.15px;">F</div><div class="t" style="left:1640px;top:275px;font-size:48px;line-height:48px;word-spacing:-10px;letter-spacing:-0.15px;">Kearsarge</div><div class="t" style="left:2px;top:340px;font-size:48px;line-height:48px;word-spacing:-10px;letter-spacing:-0.15px;">5</div><div class="t" style="left:177px;top:340px;font-size:48px;line-height:48px;word-spacing:-10px;letter-spacing:-0.15px;">12</div><div class="t" style="left:395px;top:340px;font-size:48px;line-height:48px;word-spacing:-10px;letter-spacing:-0.15px;">Fall 2019</div><div class="t" style="left:617px;top:340px;font-size:48px;line-height:48px;word-spacing:-10px;letter-spacing:-0.15px;">5/23/2019</div><div class="t" style="left:962px;top:340px;font-size:48px;line-height:48px;word-spacing:-10px;letter-spacing:-0.15px;transform:scaleX(0.92);transform-origin:0 0;">UG</div><div class="t" style="left:1241px;top:340px;font-size:48px;line-height:48px;word-spacing:-10px;letter-spacing:-0.15px;transform:scaleX(0.92);transform-origin:0 0;">MATH</div><div class="t" style="left:1482px;top:340px;font-size:48px;line-height:48px;word-spacing:-10px;letter-spacing:-0.15px;">M</div><div class="t" style="left:1640px;top:340px;font-size:48px;line-height:48px;word-spacing:-10px;letter-spacing:-0.15px;">Center Sandwich</div><div class="t" style="left:2px;top:405px;font-size:48px;line-height:48px;word-spacing:-10px;letter-spacing:-0.15px;">6</div><div class="t" style="left:177px;top:405px;font-size:48px;line-height:48px;word-spacing:-10px;letter-spacing:-0.15px;">18</div><div class="t" style="left:395px;top:405px;font-size:48px;line-height:48px;word-spacing:-10px;letter-spacing:-0.15px;">Fall 2019</div><div class="t" style="left:617px;top:405px;font-size:48px;line-height:48px;word-spacing:-10px;letter-spacing:-0.15px;">6/19/2019</div><div class="t" style="left:962px;top:405px;font-size:48px;line-height:48px;word-spacing:-10px;letter-spacing:-0.15px;transform:scaleX(0.92);transform-origin:0 0;">UG</div><div class="t" style="left:1241px;top:405px;font-size:48px;line-height:48px;word-spacing:-10px;letter-spacing:-0.15px;transform:scaleX(0.92);transform-origin:0 0;">BADM</div><div class="t" style="left:1482px;top:405px;font-size:48px;line-height:48px;word-spacing:-10px;letter-spacing:-0.15px;">M</div><div class="t" style="left:1640px;top:405px;font-size:48px;line-height:48px;word-spacing:-10px;letter-spacing:-0.15px;">Conway</div><div class="t" style="left:2px;top:470px;font-size:48px;line-height:48px;word-spacing:-10px;letter-spacing:-0.15px;">7</div><div class="t" style="left:177px;top:470px;font-size:48px;line-height:48px;word-spacing:-10px;letter-spacing:-0.15px;">156</div><div class="t" style="left:395px;top:470px;font-size:48px;line-height:48px;word-spacing:-10px;letter-spacing:-0.15px;">Fall 2019</div><div class="t" style="left:617px;top:470px;font-size:48px;line-height:48px;word-spacing:-10px;letter-spacing:-0.15px;">10/31/2018</div><div class="t" style="left:962px;top:470px;font-size:48px;line-height:48px;word-spacing:-10px;letter-spacing:-0.15px;transform:scaleX(0.92);transform-origin:0 0;">UG</div><div class="t" style="left:1241px;top:470px;font-size:48px;line-height:48px;word-spacing:-10px;letter-spacing:-0.15px;transform:scaleX(0.92);transform-origin:0 0;">BIOL</div><div class="t" style="left:1482px;top:470px;font-size:48px;line-height:48px;word-spacing:-10px;letter-spacing:-0.15px;">M</div><div class="t" style="left:1640px;top:470px;font-size:48px;line-height:48px;word-spacing:-10px;letter-spacing:-0.15px;">Intervale</div><div class="t" style="left:2px;top:535px;font-size:48px;line-height:48px;word-spacing:-10px;letter-spacing:-0.15px;">8</div><div class="t" style="left:177px;top:535px;font-size:48px;line-height:48px;word-spacing:-10px;letter-spacing:-0.15px;">164</div><div class="t" style="left:395px;top:535px;font-size:48px;line-height:48px;word-spacing:-10px;letter-spacing:-0.15px;">Fall 2019</div><div class="t" style="left:617px;top:535px;font-size:48px;line-height:48px;word-spacing:-10px;letter-spacing:-0.15px;">1/17/2019</div><div class="t" style="left:962px;top:535px;font-size:48px;line-height:48px;word-spacing:-10px;letter-spacing:-0.15px;transform:scaleX(0.92);transform-origin:0 0;">UG</div><div class="t" style="left:1241px;top:535px;font-size:48px;line-height:48px;word-spacing:-10px;letter-spacing:-0.15px;transform:scaleX(0.92);transform-origin:0 0;">PELM</div><div class="t" style="left:1482px;top:535px;font-size:48px;line-height:48px;word-spacing:-10px;letter-spacing:-0.15px;">F</div><div class="t" style="left:1640px;top:535px;font-size:48px;line-height:48px;word-spacing:-10px;letter-spacing:-0.15px;">Campton</div><div class="t" style="left:2px;top:600px;font-size:48px;line-height:48px;word-spacing:-10px;letter-spacing:-0.15px;">9</div><div class="t" style="left:177px;top:600px;font-size:48px;line-height:48px;word-spacing:-10px;letter-spacing:-0.15px;">165</div><div class="t" style="left:395px;top:600px;font-size:48px;line-height:48px;word-spacing:-10px;letter-spacing:-0.15px;">Fall 2019</div><div class="t" style="left:617px;top:600px;font-size:48px;line-height:48px;word-spacing:-10px;letter-spacing:-0.15px;">1/17/2019</div><div class="t" style="left:962px;top:600px;font-size:48px;line-height:48px;word-spacing:-10px;letter-spacing:-0.15px;transform:scaleX(0.92);transform-origin:0 0;">UG</div><div class="t" style="left:1241px;top:600px;font-size:48px;line-height:48px;word-spacing:-10px;letter-spacing:-0.15px;transform:scaleX(0.92);transform-origin:0 0;">BADM</div><div class="t" style="left:1482px;top:600px;font-size:48px;line-height:48px;word-spacing:-10px;letter-spacing:-0.15px;">M</div><div class="t" style="left:1640px;top:600px;font-size:48px;line-height:48px;word-spacing:-10px;letter-spacing:-0.15px;">Conway</div><div class="t" style="left:2px;top:665px;font-size:48px;line-height:48px;word-spacing:-10px;letter-spacing:-0.15px;">10</div><div class="t" style="left:177px;top:665px;font-size:48px;line-height:48px;word-spacing:-10px;letter-spacing:-0.15px;">167</div><div class="t" style="left:395px;top:665px;font-size:48px;line-height:48px;word-spacing:-10px;letter-spacing:-0.15px;">Fall 2019</div><div class="t" style="left:617px;top:665px;font-size:48px;line-height:48px;word-spacing:-10px;letter-spacing:-0.15px;">5/4/2019</div><div class="t" style="left:962px;top:665px;font-size:48px;line-height:48px;word-spacing:-10px;letter-spacing:-0.15px;transform:scaleX(0.92);transform-origin:0 0;">UG</div><div class="t" style="left:1241px;top:665px;font-size:48px;line-height:48px;word-spacing:-10px;letter-spacing:-0.15px;transform:scaleX(0.92);transform-origin:0 0;">PMKT</div><div class="t" style="left:1482px;top:665px;font-size:48px;line-height:48px;word-spacing:-10px;letter-spacing:-0.15px;">M</div><div class="t" style="left:1640px;top:665px;font-size:48px;line-height:48px;word-spacing:-10px;letter-spacing:-0.15px;">North Sandwich</div><div class="t" style="left:2px;top:730px;font-size:48px;line-height:48px;word-spacing:-10px;letter-spacing:-0.15px;">11</div><div class="t" style="left:177px;top:730px;font-size:48px;line-height:48px;word-spacing:-10px;letter-spacing:-0.15px;">170</div><div class="t" style="left:395px;top:730px;font-size:48px;line-height:48px;word-spacing:-10px;letter-spacing:-0.15px;">Fall 2019</div><div class="t" style="left:617px;top:730px;font-size:48px;line-height:48px;word-spacing:-10px;letter-spacing:-0.15px;">10/30/2018</div><div class="t" style="left:962px;top:730px;font-size:48px;line-height:48px;word-spacing:-10px;letter-spacing:-0.15px;transform:scaleX(0.92);transform-origin:0 0;">UG</div><div class="t" style="left:1241px;top:730px;font-size:48px;line-height:48px;word-spacing:-10px;letter-spacing:-0.15px;transform:scaleX(0.92);transform-origin:0 0;">PPHE</div><div class="t" style="left:1482px;top:730px;font-size:48px;line-height:48px;word-spacing:-10px;letter-spacing:-0.15px;">F</div><div class="t" style="left:1640px;top:730px;font-size:48px;line-height:48px;word-spacing:-10px;letter-spacing:-0.15px;">Reading</div><div class="t" style="left:2px;top:795px;font-size:48px;line-height:48px;word-spacing:-10px;letter-spacing:-0.15px;">12</div><div class="t" style="left:177px;top:795px;font-size:48px;line-height:48px;word-spacing:-10px;letter-spacing:-0.15px;">171</div><div class="t" style="left:395px;top:795px;font-size:48px;line-height:48px;word-spacing:-10px;letter-spacing:-0.15px;">Fall 2019</div><div class="t" style="left:617px;top:795px;font-size:48px;line-height:48px;word-spacing:-10px;letter-spacing:-0.15px;">1/31/2019</div><div class="t" style="left:962px;top:795px;font-size:48px;line-height:48px;word-spacing:-10px;letter-spacing:-0.15px;transform:scaleX(0.92);transform-origin:0 0;">UG</div><div class="t" style="left:1241px;top:795px;font-size:48px;line-height:48px;word-spacing:-10px;letter-spacing:-0.15px;transform:scaleX(0.92);transform-origin:0 0;">CMST</div><div class="t" style="left:1482px;top:795px;font-size:48px;line-height:48px;word-spacing:-10px;letter-spacing:-0.15px;">F</div><div class="t" style="left:1640px;top:795px;font-size:48px;line-height:48px;word-spacing:-10px;letter-spacing:-0.15px;">Center Ossipee</div><div class="t" style="left:2px;top:860px;font-size:48px;line-height:48px;word-spacing:-10px;letter-spacing:-0.15px;">13</div><div class="t" style="left:177px;top:860px;font-size:48px;line-height:48px;word-spacing:-10px;letter-spacing:-0.15px;">177</div><div class="t" style="left:395px;top:860px;font-size:48px;line-height:48px;word-spacing:-10px;letter-spacing:-0.15px;">Fall 2019</div><div class="t" style="left:617px;top:860px;font-size:48px;line-height:48px;word-spacing:-10px;letter-spacing:-0.15px;">10/30/2018</div><div class="t" style="left:962px;top:860px;font-size:48px;line-height:48px;word-spacing:-10px;letter-spacing:-0.15px;transform:scaleX(0.92);transform-origin:0 0;">UG</div><div class="t" style="left:1241px;top:860px;font-size:48px;line-height:48px;word-spacing:-10px;letter-spacing:-0.15px;transform:scaleX(0.92);transform-origin:0 0;">UNDC</div><div class="t" style="left:1482px;top:860px;font-size:48px;line-height:48px;word-spacing:-10px;letter-spacing:-0.15px;">F</div><div class="t" style="left:1640px;top:860px;font-size:48px;line-height:48px;word-spacing:-10px;letter-spacing:-0.15px;">Williston</div><div class="t" style="left:2px;top:925px;font-size:48px;line-height:48px;word-spacing:-10px;letter-spacing:-0.15px;">14</div><div class="t" style="left:177px;top:925px;font-size:48px;line-height:48px;word-spacing:-10px;letter-spacing:-0.15px;">179</div><div class="t" style="left:395px;top:925px;font-size:48px;line-height:48px;word-spacing:-10px;letter-spacing:-0.15px;">Fall 2019</div><div class="t" style="left:617px;top:925px;font-size:48px;line-height:48px;word-spacing:-10px;letter-spacing:-0.15px;">11/16/2018</div><div class="t" style="left:962px;top:925px;font-size:48px;line-height:48px;word-spacing:-10px;letter-spacing:-0.15px;transform:scaleX(0.92);transform-origin:0 0;">UG</div><div class="t" style="left:1241px;top:925px;font-size:48px;line-height:48px;word-spacing:-10px;letter-spacing:-0.15px;transform:scaleX(0.92);transform-origin:0 0;">PSYC</div><div class="t" style="left:1482px;top:925px;font-size:48px;line-height:48px;word-spacing:-10px;letter-spacing:-0.15px;">M</div><div class="t" style="left:1640px;top:925px;font-size:48px;line-height:48px;word-spacing:-10px;letter-spacing:-0.15px;">Ossipee</div><div class="t" style="left:2px;top:990px;font-size:48px;line-height:48px;word-spacing:-10px;letter-spacing:-0.15px;">15</div><div class="t" style="left:177px;top:990px;font-size:48px;line-height:48px;word-spacing:-10px;letter-spacing:-0.15px;">182</div><div class="t" style="left:395px;top:990px;font-size:48px;line-height:48px;word-spacing:-10px;letter-spacing:-0.15px;">Fall 2019</div><div class="t" style="left:617px;top:990px;font-size:48px;line-height:48px;word-spacing:-10px;letter-spacing:-0.15px;">4/26/2019</div><div class="t" style="left:962px;top:990px;font-size:48px;line-height:48px;word-spacing:-10px;letter-spacing:-0.15px;transform:scaleX(0.92);transform-origin:0 0;">UG</div><div class="t" style="left:1241px;top:990px;font-size:48px;line-height:48px;word-spacing:-10px;letter-spacing:-0.15px;transform:scaleX(0.92);transform-origin:0 0;">ACCT</div><div class="t" style="left:1482px;top:990px;font-size:48px;line-height:48px;word-spacing:-10px;letter-spacing:-0.15px;">F</div><div class="t" style="left:1640px;top:990px;font-size:48px;line-height:48px;word-spacing:-10px;letter-spacing:-0.15px;">Derby Line</div><div class="t" style="left:2px;top:1055px;font-size:48px;line-height:48px;word-spacing:-10px;letter-spacing:-0.15px;">16</div><div class="t" style="left:177px;top:1055px;font-size:48px;line-height:48px;word-spacing:-10px;letter-spacing:-0.15px;">184</div><div class="t" style="left:395px;top:1055px;font-size:48px;line-height:48px;word-spacing:-10px;letter-spacing:-0.15px;">Fall 2019</div><div class="t" style="left:617px;top:1055px;font-size:48px;line-height:48px;word-spacing:-10px;letter-spacing:-0.15px;">10/1/2018</div><div class="t" style="left:962px;top:1055px;font-size:48px;line-height:48px;word-spacing:-10px;letter-spacing:-0.15px;transform:scaleX(0.92);transform-origin:0 0;">UG</div><div class="t" style="left:1241px;top:1055px;font-size:48px;line-height:48px;word-spacing:-10px;letter-spacing:-0.15px;transform:scaleX(0.92);transform-origin:0 0;">UNDC</div><div class="t" style="left:1482px;top:1055px;font-size:48px;line-height:48px;word-spacing:-10px;letter-spacing:-0.15px;">F</div><div class="t" style="left:1640px;top:1055px;font-size:48px;line-height:48px;word-spacing:-10px;letter-spacing:-0.15px;">Silver Lake</div><div class="t" style="left:2px;top:1120px;font-size:48px;line-height:48px;word-spacing:-10px;letter-spacing:-0.15px;">17</div><div class="t" style="left:177px;top:1120px;font-size:48px;line-height:48px;word-spacing:-10px;letter-spacing:-0.15px;">187</div><div class="t" style="left:395px;top:1120px;font-size:48px;line-height:48px;word-spacing:-10px;letter-spacing:-0.15px;">Fall 2019</div><div class="t" style="left:617px;top:1120px;font-size:48px;line-height:48px;word-spacing:-10px;letter-spacing:-0.15px;">10/26/2018</div><div class="t" style="left:962px;top:1120px;font-size:48px;line-height:48px;word-spacing:-10px;letter-spacing:-0.15px;transform:scaleX(0.92);transform-origin:0 0;">UG</div><div class="t" style="left:1241px;top:1120px;font-size:48px;line-height:48px;word-spacing:-10px;letter-spacing:-0.15px;transform:scaleX(0.92);transform-origin:0 0;">BIOL</div><div class="t" style="left:1482px;top:1120px;font-size:48px;line-height:48px;word-spacing:-10px;letter-spacing:-0.15px;">F</div><div class="t" style="left:1640px;top:1120px;font-size:48px;line-height:48px;word-spacing:-10px;letter-spacing:-0.15px;">Jackson</div><div class="t" style="left:2px;top:1185px;font-size:48px;line-height:48px;word-spacing:-10px;letter-spacing:-0.15px;">18</div><div class="t" style="left:177px;top:1185px;font-size:48px;line-height:48px;word-spacing:-10px;letter-spacing:-0.15px;">192</div><div class="t" style="left:395px;top:1185px;font-size:48px;line-height:48px;word-spacing:-10px;letter-spacing:-0.15px;">Fall 2019</div><div class="t" style="left:617px;top:1185px;font-size:48px;line-height:48px;word-spacing:-10px;letter-spacing:-0.15px;">10/9/2018</div><div class="t" style="left:962px;top:1185px;font-size:48px;line-height:48px;word-spacing:-10px;letter-spacing:-0.15px;transform:scaleX(0.92);transform-origin:0 0;">UG</div><div class="t" style="left:1241px;top:1185px;font-size:48px;line-height:48px;word-spacing:-10px;letter-spacing:-0.15px;transform:scaleX(0.92);transform-origin:0 0;">FREN</div><div class="t" style="left:1482px;top:1185px;font-size:48px;line-height:48px;word-spacing:-10px;letter-spacing:-0.15px;">M</div><div class="t" style="left:1640px;top:1185px;font-size:48px;line-height:48px;word-spacing:-10px;letter-spacing:-0.15px;">Ossipee</div><div class="t" style="left:2px;top:1250px;font-size:48px;line-height:48px;word-spacing:-10px;letter-spacing:-0.15px;">19</div><div class="t" style="left:177px;top:1250px;font-size:48px;line-height:48px;word-spacing:-10px;letter-spacing:-0.15px;">196</div><div class="t" style="left:395px;top:1250px;font-size:48px;line-height:48px;word-spacing:-10px;letter-spacing:-0.15px;">Fall 2019</div><div class="t" style="left:617px;top:1250px;font-size:48px;line-height:48px;word-spacing:-10px;letter-spacing:-0.15px;">9/18/2018</div><div class="t" style="left:962px;top:1250px;font-size:48px;line-height:48px;word-spacing:-10px;letter-spacing:-0.15px;transform:scaleX(0.92);transform-origin:0 0;">UG</div><div class="t" style="left:1241px;top:1250px;font-size:48px;line-height:48px;word-spacing:-10px;letter-spacing:-0.15px;transform:scaleX(0.92);transform-origin:0 0;">PHLT</div><div class="t" style="left:1482px;top:1250px;font-size:48px;line-height:48px;word-spacing:-10px;letter-spacing:-0.15px;">F</div><div class="t" style="left:1640px;top:1250px;font-size:48px;line-height:48px;word-spacing:-10px;letter-spacing:-0.15px;">Glen</div><div class="t" style="left:2px;top:1315px;font-size:48px;line-height:48px;word-spacing:-10px;letter-spacing:-0.15px;">20</div><div class="t" style="left:177px;top:1315px;font-size:48px;line-height:48px;word-spacing:-10px;letter-spacing:-0.15px;">197</div><div class="t" style="left:395px;top:1315px;font-size:48px;line-height:48px;word-spacing:-10px;letter-spacing:-0.15px;">Fall 2019</div><div class="t" style="left:617px;top:1315px;font-size:48px;line-height:48px;word-spacing:-10px;letter-spacing:-0.15px;">8/31/2018</div><div class="t" style="left:962px;top:1315px;font-size:48px;line-height:48px;word-spacing:-10px;letter-spacing:-0.15px;transform:scaleX(0.92);transform-origin:0 0;">UG</div><div class="t" style="left:1241px;top:1315px;font-size:48px;line-height:48px;word-spacing:-10px;letter-spacing:-0.15px;transform:scaleX(0.92);transform-origin:0 0;">ART</div><div class="t" style="left:1482px;top:1315px;font-size:48px;line-height:48px;word-spacing:-10px;letter-spacing:-0.15px;">M</div><div class="t" style="left:1640px;top:1315px;font-size:48px;line-height:48px;word-spacing:-10px;letter-spacing:-0.15px;">Marlboro</div><div class="t" style="left:2px;top:1380px;font-size:48px;line-height:48px;word-spacing:-10px;letter-spacing:-0.15px;">21</div><div class="t" style="left:177px;top:1380px;font-size:48px;line-height:48px;word-spacing:-10px;letter-spacing:-0.15px;">199</div><div class="t" style="left:395px;top:1380px;font-size:48px;line-height:48px;word-spacing:-10px;letter-spacing:-0.15px;">Fall 2019</div><div class="t" style="left:617px;top:1380px;font-size:48px;line-height:48px;word-spacing:-10px;letter-spacing:-0.15px;">10/30/2018</div><div class="t" style="left:962px;top:1380px;font-size:48px;line-height:48px;word-spacing:-10px;letter-spacing:-0.15px;transform:scaleX(0.92);transform-origin:0 0;">UG</div><div class="t" style="left:1241px;top:1380px;font-size:48px;line-height:48px;word-spacing:-10px;letter-spacing:-0.15px;transform:scaleX(0.92);transform-origin:0 0;">DRAM</div><div class="t" style="left:1482px;top:1380px;font-size:48px;line-height:48px;word-spacing:-10px;letter-spacing:-0.15px;">M</div><div class="t" style="left:1640px;top:1380px;font-size:48px;line-height:48px;word-spacing:-10px;letter-spacing:-0.15px;">Williston</div><div class="t" style="left:2px;top:1445px;font-size:48px;line-height:48px;word-spacing:-10px;letter-spacing:-0.15px;">22</div><div class="t" style="left:177px;top:1445px;font-size:48px;line-height:48px;word-spacing:-10px;letter-spacing:-0.15px;">200</div><div class="t" style="left:395px;top:1445px;font-size:48px;line-height:48px;word-spacing:-10px;letter-spacing:-0.15px;">Fall 2019</div><div class="t" style="left:617px;top:1445px;font-size:48px;line-height:48px;word-spacing:-10px;letter-spacing:-0.15px;">2/28/2019</div><div class="t" style="left:962px;top:1445px;font-size:48px;line-height:48px;word-spacing:-10px;letter-spacing:-0.15px;transform:scaleX(0.92);transform-origin:0 0;">UG</div><div class="t" style="left:1241px;top:1445px;font-size:48px;line-height:48px;word-spacing:-10px;letter-spacing:-0.15px;transform:scaleX(0.92);transform-origin:0 0;">PHYS</div><div class="t" style="left:1482px;top:1445px;font-size:48px;line-height:48px;word-spacing:-10px;letter-spacing:-0.15px;">F</div><div class="t" style="left:1640px;top:1445px;font-size:48px;line-height:48px;word-spacing:-10px;letter-spacing:-0.15px;">Conway</div><div class="t" style="left:2px;top:1510px;font-size:48px;line-height:48px;word-spacing:-10px;letter-spacing:-0.15px;">23</div><div class="t" style="left:177px;top:1510px;font-size:48px;line-height:48px;word-spacing:-10px;letter-spacing:-0.15px;">201</div><div class="t" style="left:395px;top:1510px;font-size:48px;line-height:48px;word-spacing:-10px;letter-spacing:-0.15px;">Fall 2019</div><div class="t" style="left:617px;top:1510px;font-size:48px;line-height:48px;word-spacing:-10px;letter-spacing:-0.15px;">10/31/2018</div><div class="t" style="left:962px;top:1510px;font-size:48px;line-height:48px;word-spacing:-10px;letter-spacing:-0.15px;transform:scaleX(0.92);transform-origin:0 0;">UG</div><div class="t" style="left:1241px;top:1510px;font-size:48px;line-height:48px;word-spacing:-10px;letter-spacing:-0.15px;transform:scaleX(0.92);transform-origin:0 0;">UNDC</div><div class="t" style="left:1482px;top:1510px;font-size:48px;line-height:48px;word-spacing:-10px;letter-spacing:-0.15px;">F</div><div class="t" style="left:1640px;top:1510px;font-size:48px;line-height:48px;word-spacing:-10px;letter-spacing:-0.15px;">Glen</div><div class="t" style="left:2px;top:1575px;font-size:48px;line-height:48px;word-spacing:-10px;letter-spacing:-0.15px;">24</div><div class="t" style="left:177px;top:1575px;font-size:48px;line-height:48px;word-spacing:-10px;letter-spacing:-0.15px;">202</div><div class="t" style="left:395px;top:1575px;font-size:48px;line-height:48px;word-spacing:-10px;letter-spacing:-0.15px;">Fall 2019</div><div class="t" style="left:617px;top:1575px;font-size:48px;line-height:48px;word-spacing:-10px;letter-spacing:-0.15px;">2/1/2019</div><div class="t" style="left:962px;top:1575px;font-size:48px;line-height:48px;word-spacing:-10px;letter-spacing:-0.15px;transform:scaleX(0.92);transform-origin:0 0;">UG</div><div class="t" style="left:1241px;top:1575px;font-size:48px;line-height:48px;word-spacing:-10px;letter-spacing:-0.15px;transform:scaleX(0.92);transform-origin:0 0;">PSYC</div><div class="t" style="left:1482px;top:1575px;font-size:48px;line-height:48px;word-spacing:-10px;letter-spacing:-0.15px;">M</div><div class="t" style="left:1640px;top:1575px;font-size:48px;line-height:48px;word-spacing:-10px;letter-spacing:-0.15px;">North Smithfield</div><div class="t" style="left:2px;top:1640px;font-size:48px;line-height:48px;word-spacing:-10px;letter-spacing:-0.15px;">25</div><div class="t" style="left:177px;top:1640px;font-size:48px;line-height:48px;word-spacing:-10px;letter-spacing:-0.15px;">203</div><div class="t" style="left:395px;top:1640px;font-size:48px;line-height:48px;word-spacing:-10px;letter-spacing:-0.15px;">Fall 2019</div><div class="t" style="left:617px;top:1640px;font-size:48px;line-height:48px;word-spacing:-10px;letter-spacing:-0.15px;">10/10/2018</div><div class="t" style="left:962px;top:1640px;font-size:48px;line-height:48px;word-spacing:-10px;letter-spacing:-0.15px;transform:scaleX(0.92);transform-origin:0 0;">UG</div><div class="t" style="left:1241px;top:1640px;font-size:48px;line-height:48px;word-spacing:-10px;letter-spacing:-0.15px;transform:scaleX(0.92);transform-origin:0 0;">PHLT</div><div class="t" style="left:1482px;top:1640px;font-size:48px;line-height:48px;word-spacing:-10px;letter-spacing:-0.15px;">F</div><div class="t" style="left:1640px;top:1640px;font-size:48px;line-height:48px;word-spacing:-10px;letter-spacing:-0.15px;">Center Sandwich</div><div class="t" style="left:2px;top:1705px;font-size:48px;line-height:48px;word-spacing:-10px;letter-spacing:-0.15px;">26</div><div class="t" style="left:177px;top:1705px;font-size:48px;line-height:48px;word-spacing:-10px;letter-spacing:-0.15px;">204</div><div class="t" style="left:395px;top:1705px;font-size:48px;line-height:48px;word-spacing:-10px;letter-spacing:-0.15px;">Fall 2019</div><div class="t" style="left:617px;top:1705px;font-size:48px;line-height:48px;word-spacing:-10px;letter-spacing:-0.15px;">11/16/2018</div><div class="t" style="left:962px;top:1705px;font-size:48px;line-height:48px;word-spacing:-10px;letter-spacing:-0.15px;transform:scaleX(0.92);transform-origin:0 0;">UG</div><div class="t" style="left:1241px;top:1705px;font-size:48px;line-height:48px;word-spacing:-10px;letter-spacing:-0.15px;transform:scaleX(0.92);transform-origin:0 0;">CHEM</div><div class="t" style="left:1482px;top:1705px;font-size:48px;line-height:48px;word-spacing:-10px;letter-spacing:-0.15px;">F</div><div class="t" style="left:1640px;top:1705px;font-size:48px;line-height:48px;word-spacing:-10px;letter-spacing:-0.15px;">Moultonborough</div></div><svg style="left:0;top:0;width:3840px;height:2258px;pointer-events:none" width="3840" height="2258"><g fill="#a3a3a3"><path d="M3796 622.5 L3808 610.5 L3820 622.5 L3820 628.6 L3808 616.6 L3796 628.6 Z"/><path d="M3796 2081 L3808 2093 L3820 2081 L3820 2087.5 L3808 2099.5 L3796 2087.5 Z"/><path d="M1374 2137 L1369 2137 L1357 2149 L1369 2161 L1374 2161 L1362.5 2149 Z"/><path d="M3739 2137 L3744 2137 L3756 2149 L3744 2161 L3739 2161 L3750.5 2149 Z"/></g></svg><div style="left:3778px;top:648px;width:60px;height:28px;background:#cdcdcd"></div><div style="left:1396px;top:2119px;width:2129px;height:60px;background:#cdcdcd"></div><div style="left:6px;top:2179px;width:3832px;height:77px;background:#f0edec"></div><div style="left:2px;top:2256px;width:3838px;height:2px;background:#a9a9a9"></div><div style="left:497px;top:2179px;width:4px;height:77px;background:#6e6e6e"></div><div class="t" style="left:14.7px;top:2199px;font-size:42px;line-height:42px;;letter-spacing:-0.08px;">7 of 24 column(s) shown</div><div class="t" style="left:528px;top:2199px;font-size:42px;line-height:42px;;letter-spacing:-0.92px;">Records Loaded: 4070</div><div style="left:0px;top:958px;width:2px;height:122px;background:#083567"></div><div style="left:0px;top:1080px;width:2px;height:1178px;background:#000"></div>
</body></html>
